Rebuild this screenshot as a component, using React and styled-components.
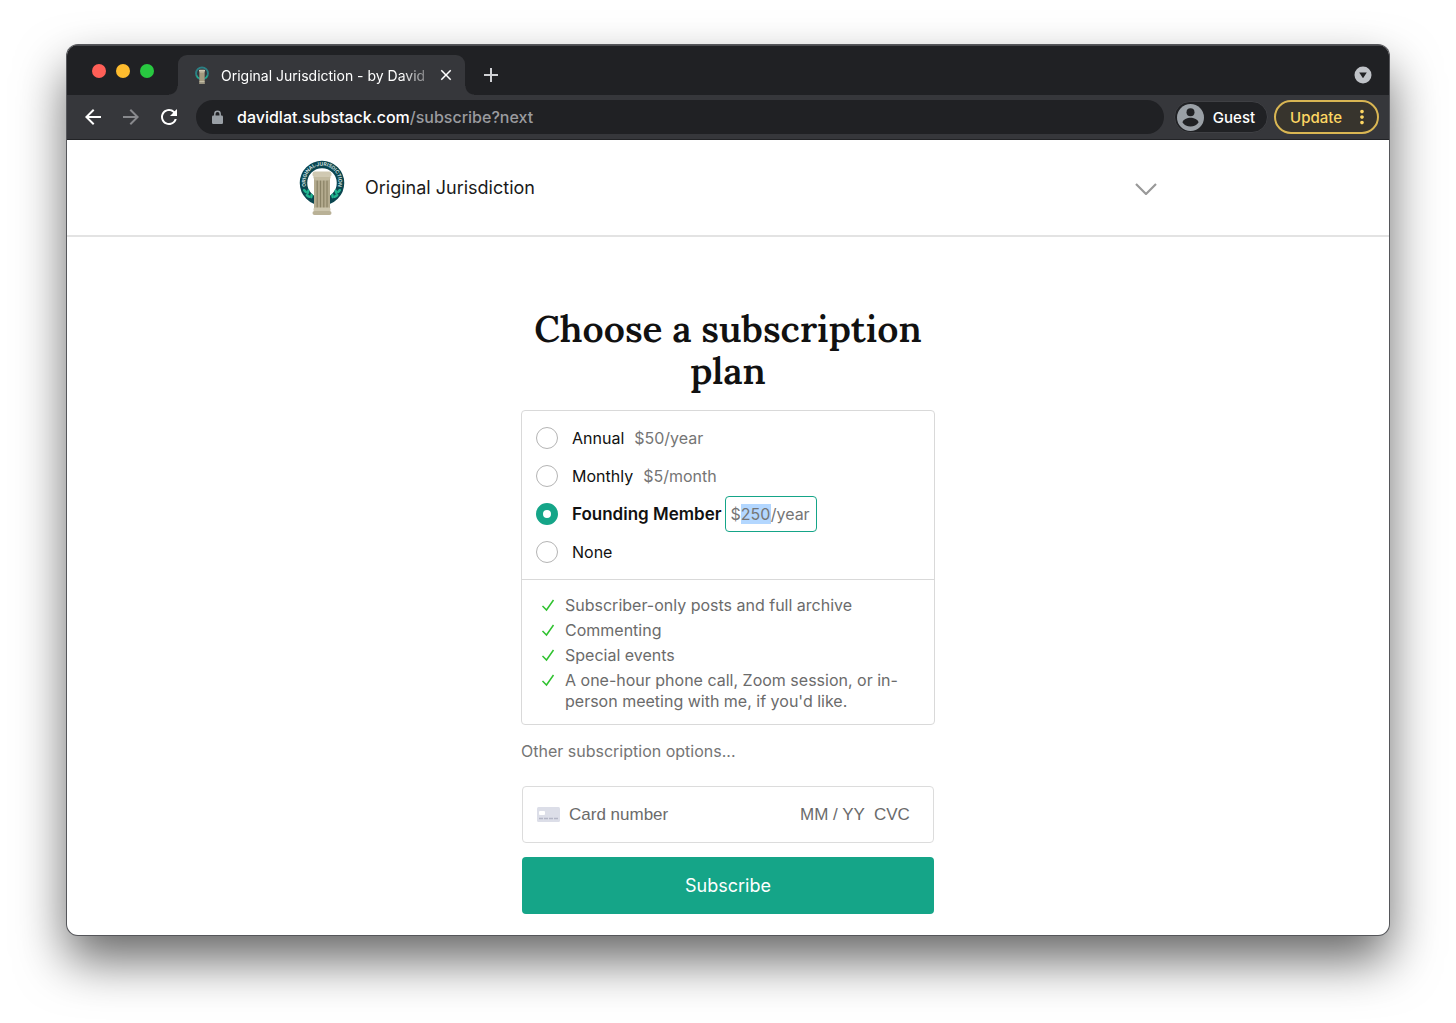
import styled, { createGlobalStyle } from "styled-components";
import { MdArrowBack, MdArrowForward, MdRefresh, MdClose, MdAdd, MdMoreVert } from "react-icons/md";

const GlobalStyle = createGlobalStyle`
    * {
        box-sizing: border-box;
    }
    body {
        margin: 0;
        background-color: white;
        font-family: Inter, "Liberation Sans", sans-serif;
        color: #111;
    }
    button, input {
        font: inherit;
        color: inherit;
        padding: 0;
        border: none;
        background: none;
        outline: none;
    }
    button {
        cursor: pointer;
    }
`;

const Window = styled.div`
    margin: 45px 67px 88px;
    border-radius: 11px;
    overflow: hidden;
    background-color: white;
    box-shadow: 0 0 0 1px #55565a, 0 25px 50px rgba(0, 0, 0, 0.6);
`;
const TabStrip = styled.div`
    height: 50px;
    display: flex;
    align-items: flex-end;
    background-color: #202124;
    border-top: 1px solid #4a4b4f;
`;
const Lights = styled.div`
    height: 48px;
    display: flex;
    align-items: center;
    gap: 10px;
    padding: 0 24px 0 25px;
`;
const Light = styled.button`
    width: 14px;
    height: 14px;
    border-radius: 50%;
    background-color: ${props=>props.$color};
`;
const Tab = styled.div`
    position: relative;
    width: 287px;
    height: 40px;
    display: flex;
    align-items: center;
    padding: 0 8px 0 16px;
    border-radius: 9px 9px 0 0;
    background-color: #36373b;
    color: white;

    &::before, &::after {
        content: "";
        position: absolute;
        bottom: 0;
        width: 9px;
        height: 9px;
    }
    &::before {
        right: 100%;
        background: radial-gradient(circle at 0 0, transparent 8px, #36373b 9px);
    }
    &::after {
        left: 100%;
        background: radial-gradient(circle at 100% 0, transparent 8px, #36373b 9px);
    }
`;
const TabTitle = styled.span`
    flex: 1;
    margin-left: 11px;
    font-size: 14px;
    white-space: nowrap;
    mask-image: linear-gradient(to right, black 84%, transparent 102%);
`;
const IconButton = styled.button`
    display: flex;
    align-items: center;
    justify-content: center;
    width: 22px;
    height: 22px;
    flex: none;
    font-size: ${props=>props.$size || 24}px;
    color: ${props=>props.$color || "white"};

    svg {
        flex: none;
    }
`;
const NewTab = styled.div`
    height: 40px;
    display: flex;
    align-items: center;
    padding-left: 15px;
`;
const TabSearch = styled(NewTab)`
    margin-left: auto;
    padding-right: 15px;
`;
const Toolbar = styled.div`
    height: 45px;
    display: flex;
    align-items: center;
    padding: 0 10px 0 15px;
    background-color: #36373b;
    border-bottom: 1px solid #222326;
`;
const NavButtons = styled.div`
    display: flex;
    gap: 16px;
    margin-right: 16px;
`;
const AddressBar = styled.label`
    flex: 1;
    height: 34px;
    display: flex;
    align-items: center;
    padding: 0 16px;
    border-radius: 17px;
    background-color: #202124;
    color: #9a9b9f;
    font-size: 16px;
    font-weight: 500;
`;
const Host = styled.span`
    margin-left: 14px;
    color: white;
`;
const Path = styled.input`
    flex: 1;
    min-width: 0;
`;
const Profile = styled.button`
    height: 32px;
    display: flex;
    align-items: center;
    gap: 9px;
    margin: 0 6px 0 10px;
    padding: 0 12px 0 2px;
    border: 1px solid #3f4044;
    border-radius: 16px;
    background-color: #202124;
    color: white;
    font-size: 15px;
    font-weight: 500;
`;
const Update = styled.button`
    height: 34px;
    display: flex;
    align-items: center;
    gap: 9px;
    padding: 0 4px 0 14px;
    border: 2px solid #d9b653;
    border-radius: 17px;
    background-color: #37342d;
    color: #fdd663;
    font-size: 15px;
    font-weight: 500;
`;
const Header = styled.header`
    border-bottom: 2px solid #e3e3e3;
`;
const HeaderInner = styled.div`
    max-width: 858px;
    height: 95px;
    margin: 0 auto;
    display: flex;
    align-items: center;
`;
const SiteLink = styled.a`
    display: flex;
    align-items: center;
    gap: 20px;
    color: #1a1a1a;
    font-size: 18px;
    text-decoration: none;
`;
const MenuButton = styled(IconButton)`
    margin-left: auto;
`;
const Form = styled.form`
    max-width: 414px;
    margin: 0 auto;
    padding: 71px 0 21px;
`;
const Title = styled.h1`
    margin: 0 0 18px;
    font-family: Lora, "Liberation Serif", serif;
    font-size: 37px;
    font-weight: 600;
    line-height: 42px;
    text-align: center;
`;
const Card = styled.div`
    border: 1px solid #d9d9d9;
    border-radius: 4px;
    font-size: 16px;
`;
const Plans = styled.div`
    padding: 8px 14px;
    border-bottom: 1px solid #d9d9d9;
`;
const Plan = styled.div`
    height: 38px;
    display: flex;
    align-items: center;
`;
const Radio = styled.input`
    appearance: none;
    flex: none;
    width: 22px;
    height: 22px;
    margin: 0 14px 0 0;
    border: 1px solid #b4b4b4;
    border-radius: 50%;

    &:checked {
        border: 7px solid #15a588;
    }
`;
const PlanLabel = styled.label`
    color: #111;
    font-size: ${props=>props.$selected ? 17 : 16}px;
    font-weight: ${props=>props.$selected ? 600 : 400};
`;
const Price = styled.span`
    margin-left: 10px;
    color: #757575;
`;
const PriceBox = styled.label`
    height: 36px;
    display: flex;
    align-items: center;
    margin-left: 4px;
    padding: 0 6px 0 4px;
    border: 1px solid #15a588;
    border-radius: 4px;
    color: #757575;
`;
const PriceInput = styled.input`
    width: 30px;
    height: 20px;
    background-color: #b3d7ff;
`;
const Perks = styled.ul`
    margin: 0;
    padding: 15px 19px 8px;
    list-style: none;
    color: #6b6b6b;
    line-height: 21px;
`;
const Perk = styled.li`
    display: flex;
    gap: 10px;
    margin-bottom: 4px;
`;
const CheckIcon = styled.svg`
    flex: none;
    width: 14px;
    height: 21px;
`;
const OtherOptions = styled.a`
    display: block;
    margin: 16px 0 24px;
    color: #757575;
    font-size: 16px;
    line-height: 21px;
    text-decoration: none;
`;
const Payment = styled.div`
    padding: 0 1px;
`;
const CardField = styled.div`
    height: 57px;
    display: flex;
    align-items: center;
    padding: 0 22px 0 14px;
    border: 1px solid #dcdcdc;
    border-radius: 4px;
    font-family: "Liberation Sans", Arial, sans-serif;
    font-size: 17px;
`;
const CardInput = styled.input`
    width: ${props=>props.$width || "auto"};
    flex: ${props=>props.$width ? "none" : 1};
    min-width: 0;
    margin-left: 9px;

    &::placeholder {
        color: #6b6b6b;
        opacity: 1;
    }
`;
const SubscribeButton = styled.button`
    width: 100%;
    height: 57px;
    margin-top: 14px;
    border-radius: 4px;
    background-color: #15a588;
    color: white;
    font-size: 18px;
`;

const plans = [
    { id: "annual", name: "Annual", price: "$50/year" },
    { id: "monthly", name: "Monthly", price: "$5/month" },
    { id: "founding", name: "Founding Member", amount: 250 },
    { id: "none", name: "None" },
];

const perks = [
    "Subscriber-only posts and full archive",
    "Commenting",
    "Special events",
    "A one-hour phone call, Zoom session, or in-person meeting with me, if you'd like.",
];

const Logo = ({ width, height, small }) => (
    <svg width={width} height={height} viewBox="0 0 46 56" aria-hidden="true">
        <circle cx="23" cy="23" r="18.5" fill={small ? "none" : "white"} stroke={small ? "#2c7f83" : "#0b4650"} strokeWidth={small ? 6 : 7.5} />
        {!small && (
            <>
                <path id="ring" d="M8.8 30.5 A16.5 16.5 0 1 1 37.2 30.5" fill="none" />
                <text fill="#dce8e6" fontSize="5" fontWeight="600">
                    <textPath href="#ring" startOffset="50%" textAnchor="middle">ORIGINAL·JURISDICTION</textPath>
                </text>
            </>
        )}
        <g fill="#20b58f">
            <ellipse cx="6" cy="31" rx="1.3" ry="2.6" transform="rotate(-45 6 31)" />
            <ellipse cx="9" cy="32" rx="1.3" ry="2.8" transform="rotate(15 9 32)" />
            <ellipse cx="9" cy="36" rx="1.3" ry="2.8" transform="rotate(-60 9 36)" />
            <ellipse cx="12.5" cy="36" rx="1.3" ry="2.6" transform="rotate(5 12.5 36)" />
            <ellipse cx="40" cy="31" rx="1.3" ry="2.6" transform="rotate(45 40 31)" />
            <ellipse cx="37" cy="32" rx="1.3" ry="2.8" transform="rotate(-15 37 32)" />
            <ellipse cx="37" cy="36" rx="1.3" ry="2.8" transform="rotate(60 37 36)" />
            <ellipse cx="33.5" cy="36" rx="1.3" ry="2.6" transform="rotate(-5 33.5 36)" />
        </g>
        <rect x="15" y="16" width="16" height="34" fill="#b3aa8e" />
        <path d="M18.2 20v28M21.5 20v28M24.8 20v28M28 20v28" stroke="#8a8266" strokeWidth="1.2" />
        <rect x="13.5" y="11.5" width="19" height="5.5" rx="2.5" fill="#d0c9b2" />
        <path d="M14.5 17h17v1q-1 2.5-3 2.5H17.5q-2 0-3-2.5z" fill="#c2ba9f" />
        <rect x="14.5" y="47.5" width="17" height="4" rx="1.5" fill="#cdc6ae" />
        <rect x="13.5" y="51" width="19" height="4" rx="2" fill="#b9b196" />
    </svg>
);

const Lock = () => (
    <svg width="11" height="15" viewBox="0 0 11 15" fill="none" aria-hidden="true">
        <path d="M2.8 6V4a2.7 2.7 0 0 1 5.4 0v2" stroke="#9aa0a6" strokeWidth="1.5" />
        <rect y="5.5" width="11" height="8.5" rx="1.2" fill="#9aa0a6" />
    </svg>
);

const Avatar = () => (
    <svg width="27" height="27" viewBox="0 0 27 27" aria-hidden="true">
        <circle cx="13.5" cy="13.5" r="13.5" fill="#9aa0a6" />
        <circle cx="13.5" cy="8.2" r="4" fill="#202124" />
        <path d="M5.5 18.5c0-3 5-4.7 8-4.7s8 1.7 8 4.7c-1.7 2.5-4.7 4-8 4s-6.3-1.5-8-4z" fill="#202124" />
    </svg>
);

const Browser = () => {
    return (
        <>
            <TabStrip>
                <Lights>
                    <Light $color="#ff5f57" aria-label="Close window" />
                    <Light $color="#febc2e" aria-label="Minimize window" />
                    <Light $color="#28c840" aria-label="Zoom window" />
                </Lights>
                <Tab>
                    <Logo width={16} height={18} small />
                    <TabTitle>Original Jurisdiction - by David</TabTitle>
                    <IconButton $size={18} aria-label="Close tab"><MdClose /></IconButton>
                </Tab>
                <NewTab>
                    <IconButton $color="#d0d1d4" aria-label="New tab"><MdAdd /></IconButton>
                </NewTab>
                <TabSearch>
                    <IconButton aria-label="Search tabs">
                        <svg width="18" height="18" viewBox="0 0 18 18">
                            <circle cx="9" cy="9" r="8.5" fill="#c0c3c8" />
                            <path d="M5.2 6.5h7.6L9 12.3z" fill="#202124" />
                        </svg>
                    </IconButton>
                </TabSearch>
            </TabStrip>
            <Toolbar>
                <NavButtons>
                    <IconButton aria-label="Back"><MdArrowBack /></IconButton>
                    <IconButton $color="#88898d" aria-label="Forward"><MdArrowForward /></IconButton>
                    <IconButton aria-label="Reload"><MdRefresh /></IconButton>
                </NavButtons>
                <AddressBar>
                    <Lock />
                    <Host>davidlat.substack.com</Host>
                    <Path type="text" defaultValue="/subscribe?next" aria-label="Address" />
                </AddressBar>
                <Profile><Avatar />Guest</Profile>
                <Update>Update <MdMoreVert size={22} /></Update>
            </Toolbar>
        </>
    )
}

const App = () => {
    return (
        <Window>
            <GlobalStyle />
            <Browser />
            <Header>
                <HeaderInner>
                    <SiteLink href="#">
                        <Logo width={46} height={56} />
                        Original Jurisdiction
                    </SiteLink>
                    <MenuButton aria-label="Menu">
                        <svg width="22" height="14" viewBox="0 0 22 14" fill="none">
                            <path d="M1 3l10 10 10-10" stroke="#999" strokeWidth="2.2" />
                        </svg>
                    </MenuButton>
                </HeaderInner>
            </Header>
            <Form onSubmit={(e) => e.preventDefault()}>
                <Title>Choose a subscription plan</Title>
                <Card>
                    <Plans>
                        {plans.map((plan) => (
                            <Plan key={plan.id}>
                                <Radio type="radio" name="plan" id={plan.id} defaultChecked={!!plan.amount} />
                                <PlanLabel htmlFor={plan.id} $selected={!!plan.amount}>
                                    {plan.name}
                                    {plan.price && <Price>{plan.price}</Price>}
                                </PlanLabel>
                                {plan.amount && (
                                    <PriceBox>
                                        $<PriceInput type="text" defaultValue={plan.amount} aria-label="Amount" />/year
                                    </PriceBox>
                                )}
                            </Plan>
                        ))}
                    </Plans>
                    <Perks>
                        {perks.map((perk) => (
                            <Perk key={perk}>
                                <CheckIcon viewBox="0 0 14 21" fill="none">
                                    <path d="M1.5 11L5.5 15L12.5 5" stroke="#2fc22f" strokeWidth="1.5" />
                                </CheckIcon>
                                <span>{perk}</span>
                            </Perk>
                        ))}
                    </Perks>
                </Card>
                <OtherOptions href="#">Other subscription options...</OtherOptions>
                <Payment>
                    <CardField>
                        <svg width="23" height="15" viewBox="0 0 23 15" aria-hidden="true">
                            <rect width="23" height="15" rx="1.5" fill="#dcdee8" />
                            <rect x="2" y="4" width="6" height="4" rx="1" fill="white" />
                            <path d="M2 11.5h19" stroke="#b3b6c6" strokeWidth="1.5" strokeDasharray="4 1" />
                        </svg>
                        <CardInput placeholder="Card number" aria-label="Card number" />
                        <CardInput $width="65px" placeholder="MM / YY" aria-label="Expiry date" />
                        <CardInput $width="37px" placeholder="CVC" aria-label="CVC" />
                    </CardField>
                    <SubscribeButton type="submit">Subscribe</SubscribeButton>
                </Payment>
            </Form>
        </Window>
    )
}

export default App
